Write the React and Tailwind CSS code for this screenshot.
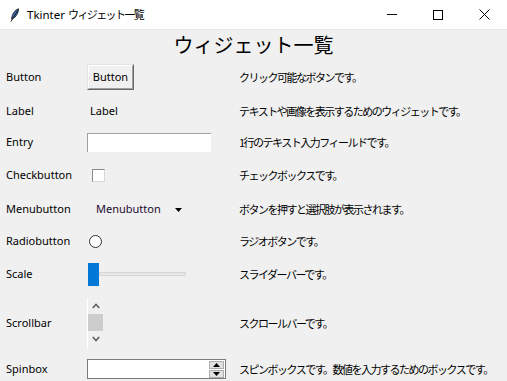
import { useState } from "react";

const latin = "font-['Segoe_UI','Noto_Sans','Noto_Sans_CJK_JP',sans-serif]";
const jp = "font-['Noto_Sans_CJK_JP',sans-serif]";

function Feather() {
    return (
        <svg width="10" height="14" viewBox="0 0 10 14">
            <path d="M8.5 0.8 C5 2 2 6 1.6 11 L3 10.5 C6 9 8.5 5 8.5 0.8 Z" fill="#3f73c8" stroke="#1b1b1b" strokeWidth="0.9" />
            <path d="M7.5 2.5 L1 13.5" stroke="#1b1b1b" strokeWidth="1" />
        </svg>
    );
}

function TitleBar() {
    return (
        <div className="h-[30px] bg-white border-b border-[#e8e8e8] flex items-center">
            <div className="w-[27px] flex justify-center pl-[2px]">
                <Feather />
            </div>
            <span className={`text-[11.5px] text-black ${latin}`}>Tkinter </span>
            <span className={`ml-[3px] text-[11px] tracking-[-1.6px] text-black ${jp}`}>ウィジェット一覧</span>
            <div className="ml-auto flex items-center h-full">
                <div className="w-[46px] h-full flex items-center justify-center">
                    <div className="w-[10px] h-px bg-black" />
                </div>
                <div className="w-[46px] h-full flex items-center justify-center">
                    <div className="w-[10px] h-[10px] border border-black" />
                </div>
                <div className="w-[46px] h-full flex items-center justify-center">
                    <svg width="11" height="11" viewBox="0 0 11 11">
                        <path d="M0.5 0.5 L10.5 10.5 M10.5 0.5 L0.5 10.5" stroke="#000" strokeWidth="1" />
                    </svg>
                </div>
            </div>
        </div>
    );
}

function Chevron({ up }) {
    return (
        <svg width="8" height="6" viewBox="0 0 8 6">
            <path d={up ? "M0.8 5 L4 1.5 L7.2 5" : "M0.8 1 L4 4.5 L7.2 1"} fill="none" stroke="#606060" strokeWidth="1.6" />
        </svg>
    );
}

function Tri({ up }) {
    return (
        <svg width="7" height="4" viewBox="0 0 7 4">
            <path d={up ? "M0 4 L3.5 0 L7 4 Z" : "M0 0 L3.5 4 L7 0 Z"} fill="#000" />
        </svg>
    );
}

function Row({ h, name, widget, desc }) {
    return (
        <div className={`grid grid-cols-[81px_152px_1fr] items-center ${h}`}>
            <span className={`text-[11px] ${latin}`}>{name}</span>
            <div className="flex items-center">{widget}</div>
            <span className={`text-[11px] tracking-[-1.5px] whitespace-nowrap ${jp}`}>{desc}</span>
        </div>
    );
}

export default function App() {
    const [checked, setChecked] = useState(false);
    const [picked, setPicked] = useState(false);

    return (
        <div className="w-[507px] h-[381px] bg-[#f0f0f0] overflow-hidden text-black">
            <TitleBar />
            <div className="h-[29px] flex items-center justify-center">
                <h1 className={`text-[20px] leading-none ${jp}`}>ウィジェット一覧</h1>
            </div>

            <div className="pl-[6px]">
                <Row
                    h="h-[36px]"
                    name="Button"
                    widget={
                        <button className="border border-t-[#e3e3e3] border-l-[#e3e3e3] border-b-[#696969] border-r-[#696969]">
                            <span className={`block border border-t-white border-l-white border-b-[#a0a0a0] border-r-[#a0a0a0] h-[24px] w-[45px] text-[11px] leading-[22px] ${latin}`}>
                                Button
                            </span>
                        </button>
                    }
                    desc="クリック可能なボタンです。"
                />
                <Row
                    h="h-[32px]"
                    name="Label"
                    widget={<span className={`ml-[3px] text-[11px] ${latin}`}>Label</span>}
                    desc="テキストや画像を表示するためのウィジェットです。"
                />
                <Row
                    h="h-[30px]"
                    name="Entry"
                    widget={<input className="w-[124px] h-[19px] bg-white border-t border-l border-[#a0a0a0] border-r-white border-b-white outline-none" />}
                    desc="1行のテキスト入力フィールドです。"
                />
                <Row
                    h="h-[36px]"
                    name="Checkbutton"
                    widget={
                        <div
                            onClick={() => setChecked(!checked)}
                            className="ml-[5px] w-[13px] h-[13px] bg-white border border-[#8a8a8a] border-b-[#d8d8d8] border-r-[#d8d8d8] flex items-center justify-center text-[10px] leading-none"
                        >
                            {checked ? "✓" : ""}
                        </div>
                    }
                    desc="チェックボックスです。"
                />
                <Row
                    h="h-[32px]"
                    name="Menubutton"
                    widget={
                        <div className="flex items-center ml-[9px]">
                            <span className={`text-[11px] text-[#1a0a30] ${latin}`}>Menubutton</span>
                            <span className="ml-[14px] mt-px">
                                <Tri />
                            </span>
                        </div>
                    }
                    desc="ボタンを押すと選択肢が表示されます。"
                />
                <Row
                    h="h-[32px]"
                    name="Radiobutton"
                    widget={
                        <div
                            onClick={() => setPicked(true)}
                            className="ml-[2px] w-[13px] h-[13px] rounded-full bg-white border border-[#333] flex items-center justify-center"
                        >
                            {picked && <div className="w-[5px] h-[5px] rounded-full bg-black" />}
                        </div>
                    }
                    desc="ラジオボタンです。"
                />
                <Row
                    h="h-[34px]"
                    name="Scale"
                    widget={
                        <div className="flex items-center ml-px">
                            <div className="w-[11px] h-[23px] bg-[#0078d7]" />
                            <div className="w-[87px] h-[4px] bg-[#e7e7e7] border border-[#d6d6d6]" />
                        </div>
                    }
                    desc="スライダーバーです。"
                />
                <Row
                    h="h-[64px]"
                    name="Scrollbar"
                    widget={
                        <div className="flex h-[51px] border-l border-white">
                            <div className="w-[15px] flex flex-col items-center">
                                <div className="h-[16px] flex items-center justify-center">
                                    <Chevron up />
                                </div>
                                <div className="w-[15px] h-[17px] bg-[#cdcdcd]" />
                                <div className="h-[16px] flex items-center justify-center">
                                    <Chevron />
                                </div>
                            </div>
                        </div>
                    }
                    desc="スクロールバーです。"
                />
                <Row
                    h="h-[28px]"
                    name="Spinbox"
                    widget={
                        <div className="w-[139px] h-[20px] bg-white border border-[#7a7a7a] flex items-center justify-end pr-px">
                            <div className="flex flex-col gap-px">
                                <div className="w-[15px] h-[8px] bg-[#e1e1e1] border border-[#adadad] flex items-center justify-center">
                                    <Tri up />
                                </div>
                                <div className="w-[15px] h-[8px] bg-[#e1e1e1] border border-[#adadad] flex items-center justify-center">
                                    <Tri />
                                </div>
                            </div>
                        </div>
                    }
                    desc="スピンボックスです。数値を入力するためのボックスです。"
                />
            </div>
        </div>
    );
}
